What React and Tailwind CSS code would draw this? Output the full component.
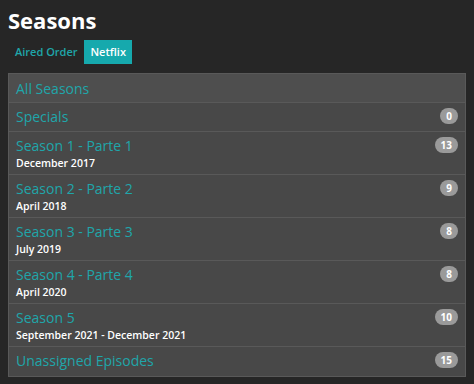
import React from 'react';

const seasons = [
  { name: 'Specials', count: 0 },
  { name: 'Season 1 - Parte 1', date: 'December 2017', count: 13 },
  { name: 'Season 2 - Parte 2', date: 'April 2018', count: 9 },
  { name: 'Season 3 - Parte 3', date: 'July 2019', count: 8 },
  { name: 'Season 4 - Parte 4', date: 'April 2020', count: 8 },
  { name: 'Season 5', date: 'September 2021 - December 2021', count: 10 },
  { name: 'Unassigned Episodes', count: 15 },
];

const App = () => {
  return (
    <div className="min-h-screen w-[474px] h-[384px] overflow-hidden bg-[#262626] px-2 pt-[4px] font-['Open_Sans',sans-serif]">
      <h1 className="text-[22px] font-bold leading-[32px] text-white">Seasons</h1>

      {/* Tabs */}
      <div className="mt-[4px] flex items-center text-[11px] font-semibold">
        <span className="px-[7px] text-[#1fa6aa]">Aired Order</span>
        <span className="flex h-[24px] items-center bg-[#16a9ad] px-[6px] text-white">Netflix</span>
      </div>

      {/* Seasons list */}
      <div className="mt-[9px] w-[458px] border border-[#595959] bg-[#484848]">
        <div className="flex h-[29px] items-center border-b border-[#595959] bg-[#4e4e4e] px-[7px] text-[14px] text-[#1fa6aa]">
          All Seasons
        </div>
        {seasons.map((s, i) => (
          <div
            key={s.name}
            className={
              'flex items-start justify-between px-[7px] ' +
              (s.date ? 'h-[43px] pt-[4px] ' : 'h-[29px] pt-[4px] ') +
              (i < seasons.length - 1 ? 'border-b border-[#595959]' : '')
            }
          >
            <div className="flex flex-col">
              <span className="text-[14px] leading-[19px] text-[#1fa6aa]">{s.name}</span>
              <span className={s.date ? 'mt-[1px] text-[10.5px] font-semibold leading-[15px] text-white' : 'hidden'}>{s.date}</span>
            </div>
            <span className="mt-[1px] flex h-[16px] min-w-[18px] items-center justify-center rounded-full bg-[#9a9a9a] px-[6px] text-[10px] font-bold text-white">
              {s.count}
            </span>
          </div>
        ))}
      </div>
    </div>
  );
};

export default App;
